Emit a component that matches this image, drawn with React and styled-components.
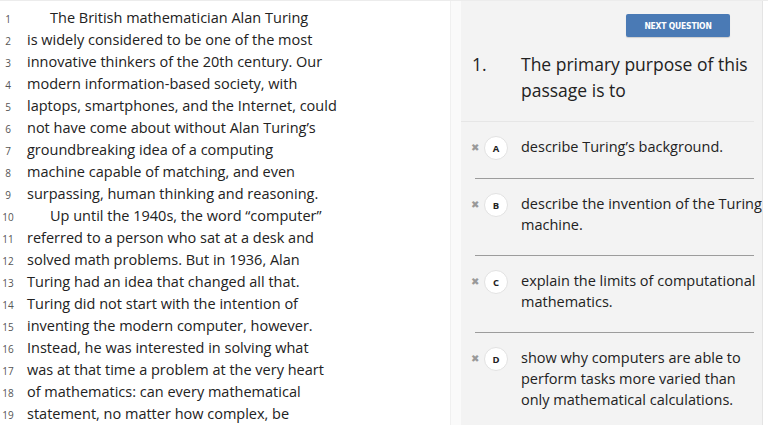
import React from "react";
import styled, { createGlobalStyle } from "styled-components";

const GlobalStyle = createGlobalStyle`
  html, body {
    margin: 0;
    padding: 0;
    background: #ffffff;
  }
  body {
    font-family: "Open Sans", "Noto Sans", sans-serif;
    color: #333;
  }
`;

const Page = styled.div`
  display: flex;
  width: 768px;
  height: 425px;
  overflow: hidden;
  border-top: 1px solid #ececec;
  box-sizing: border-box;
`;

const Passage = styled.div`
  width: 450px;
  flex-shrink: 0;
  padding-top: 6px;
  box-sizing: border-box;
`;

const Line = styled.div`
  display: flex;
  align-items: baseline;
  height: 22px;
  line-height: 22px;
  white-space: nowrap;
`;

const LineNo = styled.span`
  width: 16px;
  margin-right: 11px;
  text-align: center;
  font-size: 10px;
  color: #555;
  flex-shrink: 0;
`;

const LineText = styled.span`
  font-size: 14.5px;
  color: #222;
  padding-left: ${(p) => (p.$indent ? "23px" : "0")};
`;

const Divider = styled.div`
  width: 10px;
  flex-shrink: 0;
  background: #fafafa;
  border-left: 1px solid #f0f0f0;
`;

const QuestionPanel = styled.div`
  flex: 1;
  min-width: 0;
  overflow: hidden;
  background: #f3f3f3;
  border-right: 1px solid #e4e4e4;
  padding-top: 13px;
  display: flex;
  flex-direction: column;
`;

const Gutter = styled.div`
  width: 5px;
  flex-shrink: 0;
`;

const Toolbar = styled.div`
  display: flex;
  justify-content: flex-end;
  padding-right: 32px;
`;

const NextButton = styled.button`
  width: 104px;
  height: 23px;
  border: none;
  border-radius: 2px;
  background: #4a7ab5;
  color: #fff;
  font-family: "DejaVu Sans Condensed", "DejaVu Sans", sans-serif;
  font-stretch: condensed;
  font-weight: 700;
  font-size: 8.5px;
  letter-spacing: -0.2px;
  text-transform: uppercase;
  box-shadow: 0 1px 1px rgba(0, 0, 0, 0.15);
  padding: 0;
`;

const Question = styled.div`
  display: flex;
  margin-top: 14px;
  padding: 0 0 18px 11px;
  margin-right: 8px;
  font-size: 17.5px;
  line-height: 26px;
  color: #222;
  white-space: nowrap;
  border-bottom: 1px solid #e6e6e6;
`;

const QNum = styled.span`
  width: 49px;
  flex-shrink: 0;
`;

const Options = styled.div`
  display: flex;
  flex-direction: column;
`;

const Option = styled.div`
  display: flex;
  align-items: flex-start;
  padding: 14px 0 18px 10px;
`;

const Cross = styled.span`
  width: 9px;
  margin-top: 6px;
  margin-right: 4px;
  font-size: 10px;
  line-height: 10px;
  color: #999;
  flex-shrink: 0;
`;

const Bubble = styled.span`
  width: 24px;
  height: 24px;
  border-radius: 50%;
  background: #fff;
  border: 1px solid #e2e2e2;
  box-sizing: border-box;
  display: flex;
  align-items: center;
  justify-content: center;
  font-size: 9.5px;
  font-weight: 700;
  color: #222;
  margin-right: 13px;
  flex-shrink: 0;
`;

const OptionText = styled.span`
  font-size: 14.5px;
  line-height: 21px;
  padding-bottom: 2px;
  color: #222;
  white-space: nowrap;
`;

const Rule = styled.div`
  height: 1px;
  background: #9c9c9c;
  margin: 0 8px 0 14px;
`;

const lines = [
  ["The British mathematician Alan Turing", true],
  ["is widely considered to be one of the most"],
  ["innovative thinkers of the 20th century. Our"],
  ["modern information-based society, with"],
  ["laptops, smartphones, and the Internet, could"],
  ["not have come about without Alan Turing’s"],
  ["groundbreaking idea of a computing"],
  ["machine capable of matching, and even"],
  ["surpassing, human thinking and reasoning."],
  ["Up until the 1940s, the word “computer”", true],
  ["referred to a person who sat at a desk and"],
  ["solved math problems. But in 1936, Alan"],
  ["Turing had an idea that changed all that."],
  ["Turing did not start with the intention of"],
  ["inventing the modern computer, however."],
  ["Instead, he was interested in solving what"],
  ["was at that time a problem at the very heart"],
  ["of mathematics: can every mathematical"],
  ["statement, no matter how complex, be"],
];

const choices = [
  { key: "A", text: ["describe Turing’s background."] },
  { key: "B", text: ["describe the invention of the Turing", "machine."] },
  { key: "C", text: ["explain the limits of computational", "mathematics."] },
  {
    key: "D",
    text: [
      "show why computers are able to",
      "perform tasks more varied than",
      "only mathematical calculations.",
    ],
  },
];

const App = () => {
  return (
    <>
      <GlobalStyle />
      <Page>
        <Passage>
          {lines.map(([text, indent], i) => (
            <Line key={i}>
              <LineNo>{i + 1}</LineNo>
              <LineText $indent={indent}>{text}</LineText>
            </Line>
          ))}
        </Passage>
        <Divider />
        <QuestionPanel>
          <Toolbar>
            <NextButton>Next Question</NextButton>
          </Toolbar>
          <Question>
            <QNum>1.</QNum>
            <span>
              The primary purpose of this
              <br />
              passage is to
            </span>
          </Question>
          <Options>
            {choices.map((c, i) => (
              <React.Fragment key={c.key}>
                <Option>
                  <Cross>✖</Cross>
                  <Bubble>{c.key}</Bubble>
                  <OptionText>
                    {c.text.map((t, j) => (
                      <React.Fragment key={j}>
                        {j > 0 && <br />}
                        {t}
                      </React.Fragment>
                    ))}
                  </OptionText>
                </Option>
                {i < choices.length - 1 && <Rule />}
              </React.Fragment>
            ))}
          </Options>
        </QuestionPanel>
        <Gutter />
      </Page>
    </>
  );
};

export default App;
